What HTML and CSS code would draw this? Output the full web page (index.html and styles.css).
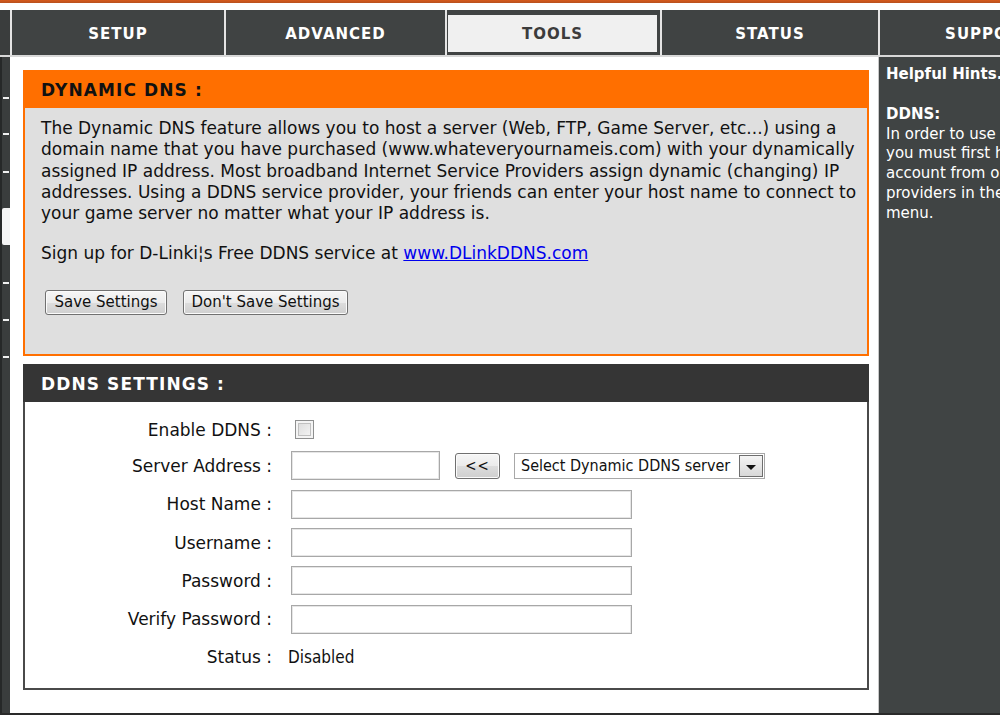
FILE: index.html
```html
<!DOCTYPE html>
<html lang="en">
<head>
<meta charset="utf-8">
<title>D-Link Tools - Dynamic DNS</title>
<link rel="stylesheet" href="styles.css">
</head>
<body>
<div class="page">
  <div class="topline"></div>
  <nav class="nav">
    <div class="nav-stub"></div>
    <div class="tab tab-setup">SETUP</div>
    <div class="tab tab-advanced">ADVANCED</div>
    <div class="tab tab-tools active"><span class="tab-inner">TOOLS</span></div>
    <div class="tab tab-status">STATUS</div>
    <div class="tab tab-support">SUPPORT</div>
  </nav>
  <div class="main">
    <aside class="leftcol">
      <span class="dash d1"></span>
      <span class="dash d2"></span>
      <span class="dash d3"></span>
      <span class="lblock"></span>
      <span class="dash d4"></span>
      <span class="dash d5"></span>
      <span class="dash d6"></span>
    </aside>
    <main class="content">
      <section class="box box-orange">
        <h2 class="box-head">DYNAMIC DNS :</h2>
        <div class="box-body">
          <p class="intro">The Dynamic DNS feature allows you to host a server (Web, FTP, Game Server, etc...) using a<br>domain name that you have purchased (www.whateveryournameis.com) with your dynamically<br>assigned IP address. Most broadband Internet Service Providers assign dynamic (changing) IP<br>addresses. Using a DDNS service provider, your friends can enter your host name to connect to<br>your game server no matter what your IP address is.</p>
          <p class="signup">Sign up for D-Linki¦s Free DDNS service at <a href="#" class="link">www.DLinkDDNS.com</a></p>
          <div class="buttons">
            <button class="btn btn-save">Save Settings</button>
            <button class="btn btn-dont">Don't Save Settings</button>
          </div>
        </div>
      </section>
      <section class="box box-dark">
        <h2 class="box-head">DDNS SETTINGS :</h2>
        <div class="form">
          <label class="lbl r1">Enable DDNS :</label>
          <div class="val r1"><input type="checkbox" class="chk"></div>
          <label class="lbl">Server Address :</label>
          <div class="val">
            <input type="text" class="txt txt-short">
            <button class="btn btn-small">&lt;&lt;</button>
            <div class="select"><span class="select-text">Select Dynamic DDNS server</span><span class="select-arrow"><span class="tri"></span></span></div>
          </div>
          <label class="lbl">Host Name :</label>
          <div class="val"><input type="text" class="txt txt-long"></div>
          <label class="lbl">Username :</label>
          <div class="val"><input type="text" class="txt txt-long"></div>
          <label class="lbl">Password :</label>
          <div class="val"><input type="password" class="txt txt-long"></div>
          <label class="lbl">Verify Password :</label>
          <div class="val"><input type="password" class="txt txt-long"></div>
          <label class="lbl">Status :</label>
          <div class="val status">Disabled</div>
        </div>
      </section>
    </main>
    <aside class="hints">
      <p class="hints-title">Helpful Hints..</p>
      <p class="hints-sub">DDNS:</p>
      <p class="hints-text">In order to use DDNS feature,<br>you must first have a Dynamic DNS<br>account from one of the<br>providers in the drop down<br>menu.</p>
    </aside>
  </div>
  <div class="bottomline"></div>
</div>
</body>
</html>
```

FILE: styles.css
```css
html, body {
  margin: 0;
  padding: 0;
  width: 1000px;
  height: 715px;
  overflow: hidden;
  background: #ffffff;
}
.page {
  width: 1100px;
  height: 715px;
  display: flex;
  flex-direction: column;
  font-family: "DejaVu Sans", sans-serif;
  color: #111;
}
.topline {
  height: 3px;
  margin-bottom: 7px;
  background: linear-gradient(to bottom, #d65a1c, #b8501e);
  flex-shrink: 0;
}
.nav {
  display: flex;
  gap: 2px;
  height: 45px;
  background: #e4e4e4;
  border-bottom: 2px solid #d8d8d8;
  flex-shrink: 0;
}
.nav-stub {
  width: 10px;
  flex-shrink: 0;
  background: #3a3d3d;
}
.tab {
  flex-shrink: 0;
  background: #404343;
  color: #ffffff;
  font-family: "DejaVu Sans", sans-serif;
  font-weight: bold;
  font-size: 15px;
  letter-spacing: 1px;
  display: flex;
  align-items: center;
  justify-content: center;
  padding-top: 2px;
  box-sizing: border-box;
}
.tab-setup { width: 212px; }
.tab-advanced { width: 219px; }
.tab-tools { width: 213px; }
.tab-status { width: 216px; }
.tab-support { width: 216px; }
.tab.active {
  padding: 5px 3px 3px 1px;
  align-items: stretch;
  justify-content: stretch;
}
.tab-inner {
  flex: 1;
  background: #f0f0f0;
  color: #3c3c3c;
  display: flex;
  align-items: center;
  justify-content: center;
}
.main {
  flex: 1;
  display: flex;
  min-height: 0;
}
.leftcol {
  width: 10px;
  flex-shrink: 0;
  background: #3a3d3d;
  border-left: 2px solid #262828;
  box-sizing: border-box;
  position: relative;
}
.dash {
  position: absolute;
  left: 1px;
  width: 6px;
  height: 2px;
  background: #f0f0f0;
}
.d1 { top: 40px; }
.d2 { top: 76px; }
.d3 { top: 114px; }
.d4 { top: 225px; }
.d5 { top: 262px; }
.d6 { top: 299px; }
.lblock {
  position: absolute;
  left: 0;
  width: 8px;
  top: 151px;
  height: 37px;
  background: #f4f4f4;
  border-radius: 2px 0 0 2px;
}
.content {
  width: 869px;
  flex-shrink: 0;
  padding: 13px 10px 0 13px;
  box-sizing: border-box;
  background: #ffffff;
  border-right: 1px solid #c8c8c8;
}
.box {
  width: 846px;
  box-sizing: border-box;
}
.box-head {
  margin: 0;
  height: 38px;
  display: flex;
  align-items: center;
  padding-left: 16px;
  padding-top: 2px;
  box-sizing: border-box;
  font-family: "DejaVu Sans", sans-serif;
  font-weight: bold;
  font-size: 17px;
  letter-spacing: 1.1px;
}
.box-orange {
  border: 2px solid #ff6f00;
  border-top: 0;
  background: #dfdfdf;
}
.box-orange .box-head {
  background: #ff6f00;
  color: #111;
  margin: 0 -2px;
  padding-left: 18px;
}
.box-body {
  padding: 10px 16px 39px 16px;
  font-size: 17px;
  line-height: 21.3px;
}
.intro {
  margin: 0;
  white-space: nowrap;
}
.signup {
  margin: 19px 0 0 0;
}
.link {
  color: #0000ee;
  text-decoration: underline;
}
.buttons {
  display: flex;
  gap: 16px;
  margin-top: 25px;
  padding-left: 4px;
}
.btn {
  font-family: "DejaVu Sans", sans-serif;
  font-size: 15px;
  color: #111;
  height: 25px;
  padding: 0;
  border: 1px solid #707070;
  border-radius: 3px;
  background: linear-gradient(to bottom, #f6f6f6 0%, #ebebeb 50%, #dddddd 51%, #cfcfcf 100%);
  box-shadow: inset 0 0 0 1px #fbfbfb;
  line-height: 22px;
  white-space: nowrap;
}
.btn-save { width: 122px; }
.btn-dont { width: 165px; }
.box-dark {
  margin-top: 8px;
  border: 2px solid #4a4a4a;
  border-top: 0;
  background: #ffffff;
}
.box-dark .box-head {
  background: #353535;
  color: #ffffff;
  margin: 0 -2px;
  padding-left: 18px;
}
.form {
  display: grid;
  grid-template-columns: 247px 1fr;
  grid-template-rows: 34px repeat(6, 38.3px);
  column-gap: 19px;
  align-items: center;
  padding: 11px 0 11px 0;
  font-size: 17px;
}
.lbl {
  text-align: right;
  color: #111;
  white-space: nowrap;
}
.val {
  display: flex;
  align-items: center;
}
.chk {
  appearance: none;
  -webkit-appearance: none;
  margin: 0 0 0 4px;
  width: 19px;
  height: 19px;
  border: 1px solid #8e8f8f;
  background: linear-gradient(135deg, #d8d8d8, #f8f8f8);
  box-shadow: inset 0 0 0 2px #f4f4f4, inset 0 0 0 3px #c0c0c0;
  box-sizing: border-box;
}
.txt {
  margin: 0;
  height: 29px;
  box-sizing: border-box;
  border: 1px solid #a8a8a8;
  box-shadow: inset 0 0 0 1px #e6e6e6;
  background: #ffffff;
  padding: 0 3px;
}
.txt-short { width: 149px; }
.txt-long { width: 341px; }
.btn-small {
  margin-left: 15px;
  width: 45px;
  height: 26px;
  padding: 0;
  font-family: "DejaVu Sans Condensed", "DejaVu Sans", sans-serif;
  font-size: 15px;
  letter-spacing: 1px;
}
.select {
  margin-left: 14px;
  width: 251px;
  height: 26px;
  box-sizing: border-box;
  border: 1px solid #a8a8a8;
  display: flex;
  align-items: center;
  justify-content: space-between;
  padding: 1px;
}
.select-text {
  padding-left: 5px;
  font-family: "DejaVu Sans Condensed", "DejaVu Sans", sans-serif;
  font-size: 16px;
  white-space: nowrap;
}
.select-arrow {
  width: 24px;
  height: 22px;
  box-sizing: border-box;
  border: 1px solid #6e6e6e;
  background: linear-gradient(to bottom, #f4f4f4, #d8d8d8);
  display: flex;
  align-items: center;
  justify-content: center;
}
.tri {
  width: 0;
  height: 0;
  margin-top: 3px;
  border-left: 5px solid transparent;
  border-right: 5px solid transparent;
  border-top: 5px solid #111;
}
.status {
  margin-left: -3px;
  font-family: "DejaVu Sans Condensed", "DejaVu Sans", sans-serif;
  font-size: 17px;
}
.hints {
  width: 220px;
  flex-shrink: 0;
  background: #404444;
  color: #ffffff;
  padding: 8px 0 0 7px;
  box-sizing: border-box;
  font-size: 15px;
  line-height: 19.8px;
  white-space: nowrap;
  overflow: hidden;
}
.hints p {
  margin: 0;
}
.hints-title {
  font-weight: bold;
}
.hints-sub {
  font-weight: bold;
  margin-top: 20px !important;
}
.bottomline {
  height: 2px;
  background: #2a2a2a;
  flex-shrink: 0;
}
```
